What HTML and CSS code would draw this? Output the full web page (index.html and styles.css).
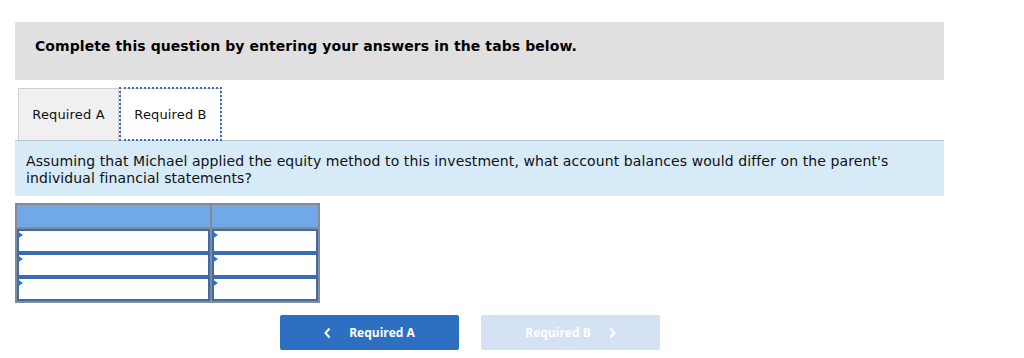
FILE: index.html
```html
<!DOCTYPE html>
<html>
<head>
    <title>Required B</title>
    <link rel="stylesheet" href="styles.css">
</head>
<body>
    <div class="page">
        <div class="instructions">Complete this question by entering your answers in the tabs below.</div>

        <div class="tabs">
            <div class="tab">Required A</div>
            <div class="tab active">Required B</div>
        </div>

        <div class="question">
            Assuming that Michael applied the equity method to this investment, what account balances would differ on the parent's individual financial statements?
        </div>

        <table class="answers">
            <thead>
                <tr>
                    <th class="col-name"></th>
                    <th class="col-value"></th>
                </tr>
            </thead>
            <tbody>
                <tr>
                    <td><div class="field"></div></td>
                    <td><div class="field"></div></td>
                </tr>
                <tr>
                    <td><div class="field"></div></td>
                    <td><div class="field"></div></td>
                </tr>
                <tr>
                    <td><div class="field"></div></td>
                    <td><div class="field"></div></td>
                </tr>
            </tbody>
        </table>

        <div class="nav">
            <button class="nav-btn prev">
                <svg class="chev" width="7" height="12" viewBox="0 0 7 12"><path d="M5.5 1.5 L1.5 6 L5.5 10.5" fill="none" stroke="#fff" stroke-width="2"/></svg>
                Required A
            </button>
            <button class="nav-btn next" disabled>
                Required B
                <svg class="chev" width="7" height="12" viewBox="0 0 7 12"><path d="M1.5 1.5 L5.5 6 L1.5 10.5" fill="none" stroke="#fff" stroke-width="2"/></svg>
            </button>
        </div>
    </div>
</body>
</html>
```

FILE: styles.css
```css
body {
    margin: 0;
    font-family: Verdana, "DejaVu Sans", sans-serif;
    color: #111;
    background: #fff;
}
.page {
    width: 929px;
    padding: 22px 0 0 15px;
}
.instructions {
    background-color: #e0e0e0;
    height: 58px;
    box-sizing: border-box;
    padding: 16px 20px 0;
    font-weight: bold;
    font-size: 14px;
    letter-spacing: 0.08px;
    color: #000;
}
.tabs {
    display: flex;
    margin-top: 8px;
    padding-left: 3px;
    border-bottom: 1px solid #c4c4c4;
}
.tab {
    width: 101px;
    height: 52px;
    box-sizing: border-box;
    display: flex;
    align-items: center;
    justify-content: center;
    font-size: 13px;
    letter-spacing: 0.15px;
    background-color: #f0f0f0;
    border: 1px solid #d0d0d0;
    border-bottom: none;
    margin-right: 1px;
}
.tab.active {
    background-color: #fff;
    outline: 2px dotted #3a6fc4;
    outline-offset: -1px;
}
.question {
    background-color: #d6eaf8;
    padding: 12px 11px 9px;
    font-size: 14px;
    line-height: 17px;
    letter-spacing: 0.1px;
}
.answers {
    border-collapse: collapse;
    margin-top: 7px;
    border: 2px solid #8a8a8a;
}
.answers th {
    background-color: #70a8e8;
    height: 22px;
    padding: 0;
    border-left: 2px solid #8a8a8a;
    border-bottom: 2px solid #8a8a8a;
}
.answers th:first-child {
    border-left: none;
}
.col-name {
    width: 193px;
}
.col-value {
    width: 106px;
}
.answers td {
    padding: 0;
    border-left: 2px solid #8a8a8a;
}
.answers td:first-child {
    border-left: none;
}
.field {
    position: relative;
    height: 20px;
    border: 2px solid #3a6cb0;
    background: #fff;
}
.field::before {
    content: '';
    position: absolute;
    left: -2px;
    top: 0;
    border-top: 4px solid transparent;
    border-bottom: 4px solid transparent;
    border-left: 6px solid #2f6fc4;
}
.nav {
    display: flex;
    gap: 22px;
    margin-top: 12px;
    padding-left: 265px;
}
.nav-btn {
    width: 179px;
    height: 35px;
    border: none;
    border-radius: 2px;
    font-family: "Open Sans", "Liberation Sans", sans-serif;
    font-weight: bold;
    font-size: 12px;
    color: #fff;
    display: flex;
    align-items: center;
    justify-content: center;
    gap: 18px;
}
.nav-btn.prev {
    background-color: #2d6fc0;
}
.nav-btn.next {
    background-color: #d5e2f4;
}
.chev {
    display: block;
}
```
